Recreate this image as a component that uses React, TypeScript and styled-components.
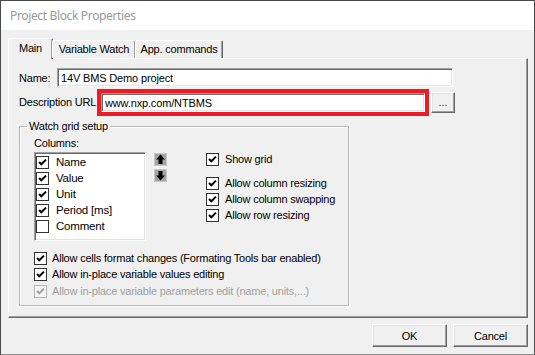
import React from 'react';
import styled, { createGlobalStyle } from 'styled-components';

const GlobalStyle = createGlobalStyle`
  html, body {
    margin: 0;
    padding: 0;
    background: #f0f0f0;
  }
  * {
    box-sizing: border-box;
  }
`;

const Window = styled.div`
  width: 535px;
  height: 355px;
  display: flex;
  flex-direction: column;
  border: 1px solid #4a4a4a;
  border-bottom-color: #8c8c8c;
  background: #f0f0f0;
  font-family: 'Liberation Sans', Arial, sans-serif;
  font-size: 11px;
  letter-spacing: -0.2px;
  color: #000;
  overflow: hidden;
`;

const TitleBar = styled.div`
  height: 29px;
  flex: none;
  display: flex;
  align-items: center;
  padding-left: 9px;
  background: #fff;
  color: #9a9a9a;
  font-family: 'Noto Sans', 'Open Sans', sans-serif;
  font-size: 12px;
  letter-spacing: -0.35px;
`;

const Body = styled.div`
  flex: 1;
  display: flex;
  flex-direction: column;
  padding: 8px 6px 0 7px;
`;

const TabStrip = styled.div`
  display: flex;
  align-items: flex-end;
  height: 20px;
  position: relative;
  z-index: 1;
`;

const Tab = styled.div<{ $active?: boolean; $width: number }>`
  width: ${(p) => p.$width}px;
  height: ${(p) => (p.$active ? 21 : 18)}px;
  margin-bottom: ${(p) => (p.$active ? -1 : 0)}px;
  margin-left: ${(p) => (p.$active ? 0 : -1)}px;
  display: flex;
  align-items: center;
  justify-content: center;
  padding-bottom: ${(p) => (p.$active ? 3 : 1)}px;
  background: #f0f0f0;
  border-top: 1px solid #fff;
  border-left: 1px solid #fff;
  border-right: 1px solid #696969;
  box-shadow: inset -1px 0 0 #a0a0a0;
  border-radius: 2px 2px 0 0;
`;

const Panel = styled.div`
  height: 260px;
  display: flex;
  flex-direction: column;
  padding: 9px 0 0 10px;
  border-top: 1px solid #fff;
  border-left: 1px solid #fff;
  border-right: 1px solid #696969;
  border-bottom: 1px solid #696969;
  box-shadow: inset -1px -1px 0 #a0a0a0;
`;

const FieldRow = styled.div`
  display: flex;
  align-items: center;
`;

const Label = styled.div<{ $width: number }>`
  width: ${(p) => p.$width}px;
  flex: none;
  white-space: nowrap;
`;

const TextBox = styled.div<{ $width: number }>`
  width: ${(p) => p.$width}px;
  height: 19px;
  display: flex;
  align-items: center;
  padding: 0 3px;
  background: #fff;
  border-top: 1px solid #a0a0a0;
  border-left: 1px solid #a0a0a0;
  border-right: 1px solid #fff;
  border-bottom: 1px solid #fff;
  box-shadow: inset 1px 1px 0 #696969, inset -1px -1px 0 #e3e3e3;
  white-space: nowrap;
  font-size: 11px;
  letter-spacing: -0.15px;
`;

const Highlight = styled.div`
  width: 332px;
  height: 27px;
  margin-top: 2px;
  border: 4px solid #ed1c24;
`;

const RaisedButton = styled.button<{ $width: number; $height: number }>`
  width: ${(p) => p.$width}px;
  height: ${(p) => p.$height}px;
  padding: 0;
  margin: 0;
  font: inherit;
  letter-spacing: inherit;
  color: #000;
  background: #f0f0f0;
  border-top: 1px solid #fff;
  border-left: 1px solid #fff;
  border-right: 1px solid #696969;
  border-bottom: 1px solid #696969;
  box-shadow: inset -1px -1px 0 #a0a0a0, inset 1px 1px 0 #e3e3e3;
  display: flex;
  align-items: center;
  justify-content: center;
`;

const BrowseButton = styled(RaisedButton)`
  margin-left: 2px;
  margin-top: 2px;
  padding-bottom: 2px;
  letter-spacing: 0;
  color: #3b2a5e;
`;

const GroupBox = styled.fieldset`
  width: 330px;
  margin: 4px 0 0 0;
  padding: 0 0 6px 14px;
  border: 1px solid #b8b8b8;
  box-shadow: 1px 1px 0 #fff, inset 1px 1px 0 #fff;
  min-width: 0;
`;

const GroupTitle = styled.legend`
  padding: 0 2px;
  margin-left: -7px;
  line-height: 13px;
`;

const GridArea = styled.div`
  display: flex;
  align-items: flex-start;
`;

const ColumnsBlock = styled.div`
  display: flex;
  flex-direction: column;
  padding-top: 4px;
`;

const ListBox = styled.div`
  width: 112px;
  height: 89px;
  margin-top: 3px;
  padding: 1px 0 0 1px;
  background: #fff;
  border-top: 1px solid #a0a0a0;
  border-left: 1px solid #a0a0a0;
  border-right: 1px solid #fff;
  border-bottom: 1px solid #fff;
  box-shadow: inset 1px 1px 0 #696969, inset -1px -1px 0 #e3e3e3;
`;

const ListItem = styled.div`
  height: 16px;
  display: flex;
  align-items: center;
  gap: 7px;
  font-size: 11.5px;
`;

const ArrowColumn = styled.div`
  display: flex;
  flex-direction: column;
  gap: 3px;
  margin: 20px 0 0 8px;
`;

const ArrowButton = styled.div`
  width: 13px;
  height: 13px;
  background: #a4a4a4;
  border: 1px solid #c8c8c8;
  display: flex;
  align-items: center;
  justify-content: center;
`;

const OptionsColumn = styled.div`
  display: flex;
  flex-direction: column;
  margin: 18px 0 0 39px;
`;

const OptionRow = styled.div<{ $gap: number; $disabled?: boolean }>`
  height: 16px;
  display: flex;
  align-items: center;
  gap: ${(p) => p.$gap}px;
  white-space: nowrap;
  color: ${(p) => (p.$disabled ? '#a0a0a0' : '#000')};
`;

const Spacer = styled.div<{ $h: number }>`
  height: ${(p) => p.$h}px;
  flex: none;
`;

const BottomOptions = styled.div`
  display: flex;
  flex-direction: column;
  margin-top: 9px;
`;

const Footer = styled.div`
  display: flex;
  justify-content: flex-end;
  gap: 6px;
  margin-top: 6px;
`;

const Box = styled.span<{ $disabled?: boolean }>`
  width: 13px;
  height: 13px;
  flex: none;
  display: inline-flex;
  align-items: center;
  justify-content: center;
  background: ${(p) => (p.$disabled ? '#f4f4f4' : '#fff')};
  border: 1px solid ${(p) => (p.$disabled ? '#b5b5b5' : '#333')};
`;

const Check = ({ checked = true, disabled }: { checked?: boolean; disabled?: boolean }) => (
  <Box $disabled={disabled}>
    {checked && (
      <svg width="11" height="11" viewBox="0 0 11 11">
        <polyline
          points="2,5 4.3,7.3 9,2.6"
          fill="none"
          stroke={disabled ? '#a0a0a0' : '#000'}
          strokeWidth="2"
        />
      </svg>
    )}
  </Box>
);

const UpArrow = () => (
  <svg width="11" height="11" viewBox="0 0 11 11">
    <polygon points="5.5,0.5 10,5.5 7.5,5.5 7.5,10 3.5,10 3.5,5.5 1,5.5" fill="#000" />
  </svg>
);

const DownArrow = () => (
  <svg width="11" height="11" viewBox="0 0 11 11">
    <polygon points="5.5,10.5 10,5.5 7.5,5.5 7.5,1 3.5,1 3.5,5.5 1,5.5" fill="#000" />
  </svg>
);

const columns = [
  { name: 'Name', checked: true },
  { name: 'Value', checked: true },
  { name: 'Unit', checked: true },
  { name: 'Period [ms]', checked: true },
  { name: 'Comment', checked: false },
];

const App = () => {
  return (
    <>
      <GlobalStyle />
      <Window>
        <TitleBar>Project Block Properties</TitleBar>
        <Body>
          <TabStrip>
            <Tab $active $width={45}>Main</Tab>
            <Tab $width={84}>Variable Watch</Tab>
            <Tab $width={88}>App. commands</Tab>
          </TabStrip>
          <Panel>
            <FieldRow>
              <Label $width={38}>Name:</Label>
              <TextBox $width={396}>14V BMS Demo project</TextBox>
            </FieldRow>
            <FieldRow>
              <Label $width={78}>Description URL</Label>
              <Highlight>
                <TextBox $width={324}>www.nxp.com/NTBMS</TextBox>
              </Highlight>
              <BrowseButton $width={24} $height={21}>...</BrowseButton>
            </FieldRow>
            <GroupBox>
              <GroupTitle>Watch grid setup</GroupTitle>
              <GridArea>
                <ColumnsBlock>
                  <div>Columns:</div>
                  <ListBox>
                    {columns.map((c) => (
                      <ListItem key={c.name}>
                        <Check checked={c.checked} />
                        {c.name}
                      </ListItem>
                    ))}
                  </ListBox>
                </ColumnsBlock>
                <ArrowColumn>
                  <ArrowButton>
                    <UpArrow />
                  </ArrowButton>
                  <ArrowButton>
                    <DownArrow />
                  </ArrowButton>
                </ArrowColumn>
                <OptionsColumn>
                  <OptionRow $gap={6}>
                    <Check />
                    Show grid
                  </OptionRow>
                  <Spacer $h={8} />
                  <OptionRow $gap={6}>
                    <Check />
                    Allow column resizing
                  </OptionRow>
                  <OptionRow $gap={6}>
                    <Check />
                    Allow column swapping
                  </OptionRow>
                  <OptionRow $gap={6}>
                    <Check />
                    Allow row resizing
                  </OptionRow>
                </OptionsColumn>
              </GridArea>
              <BottomOptions>
                <OptionRow $gap={5}>
                  <Check />
                  Allow cells format changes (Formating Tools bar enabled)
                </OptionRow>
                <OptionRow $gap={5}>
                  <Check />
                  Allow in-place variable values editing
                </OptionRow>
                <Spacer $h={1} />
                <OptionRow $gap={5} $disabled>
                  <Check disabled />
                  Allow in-place variable parameters edit (name, units,...)
                </OptionRow>
              </BottomOptions>
            </GroupBox>
          </Panel>
          <Footer>
            <RaisedButton $width={75} $height={23}>OK</RaisedButton>
            <RaisedButton $width={75} $height={23}>Cancel</RaisedButton>
          </Footer>
        </Body>
      </Window>
    </>
  );
};

export default App;
